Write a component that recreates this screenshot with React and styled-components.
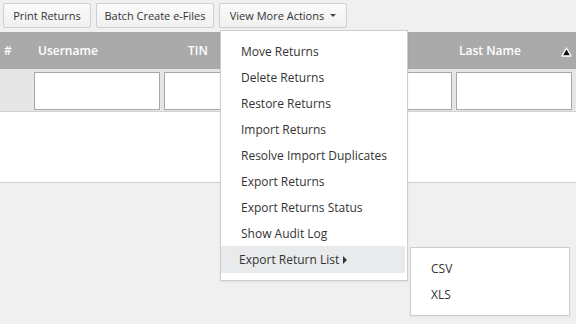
import React from "react";
import styled, { createGlobalStyle } from "styled-components";

const Global = createGlobalStyle`
  html, body { margin: 0; padding: 0; background: #f0f0f0; }
  body { font-family: "Open Sans", "Noto Sans", sans-serif; }
`;

const Page = styled.div`
  position: relative;
  width: 576px;
  height: 324px;
  overflow: hidden;
  background: #f0f0f0;
`;

const Toolbar = styled.div`
  display: flex;
  gap: 5px;
  height: 32px;
  padding: 3px 0 0 3px;
  box-sizing: border-box;
`;

const Button = styled.button`
  height: 25px;
  width: ${(p) => p.$w}px;
  padding: 0;
  border: 1px solid #cfcfcf;
  border-radius: 2px;
  background: linear-gradient(#fbfbfb, #f0f0f0);
  font-family: inherit;
  font-size: 11px;
  color: #333;
  display: flex;
  align-items: center;
  justify-content: center;
  gap: 6px;
`;

const Caret = styled.span`
  width: 0;
  height: 0;
  border-left: 3px solid transparent;
  border-right: 3px solid transparent;
  border-top: 3px solid #444;
`;

const Grid = styled.div`
  display: grid;
  grid-template-columns: 30px 130px 130px 162px 124px;
`;

const Header = styled(Grid)`
  height: 37px;
  background: #aaaaaa;
  color: #fff;
  font-size: 12px;
  font-weight: 600;
  align-items: center;
`;

const HeadCell = styled.div`
  position: relative;
  padding-left: ${(p) => p.$pl || 0}px;
  height: 100%;
  display: flex;
  align-items: center;
`;

const SortIcon = styled.svg`
  position: absolute;
  right: 4px;
  top: 15px;
`;

const FilterRow = styled(Grid)`
  height: 43px;
  background: #e6e6e6;
  border-bottom: 1px solid #d0d0d0;
  box-sizing: border-box;
  padding-top: 3px;
`;

const FilterCell = styled.div`
  padding: 0 ${(p) => (p.$last ? 4 : 0)}px 0 4px;
`;

const Input = styled.input`
  box-sizing: border-box;
  width: 100%;
  height: 38px;
  border: 1px solid #a8a8a8;
  background: #fff;
  margin: 0;
  padding: 0;
  display: block;
`;

const Body = styled.div`
  height: 70px;
  background: #fff;
  border-bottom: 1px solid #cfcfcf;
`;

const Menu = styled.div`
  position: absolute;
  left: ${(p) => p.$left}px;
  top: ${(p) => p.$top}px;
  width: ${(p) => p.$w}px;
  box-sizing: border-box;
  background: #fff;
  border: 1px solid #cdcdcd;
  padding: 8px 0 7px;
  box-shadow: 0 1px 2px rgba(0, 0, 0, 0.06);
`;

const Item = styled.div`
  height: 26px;
  line-height: 26px;
  padding-left: ${(p) => p.$pl || 20}px;
  font-size: 12px;
  color: #333;
  background: ${(p) => (p.$active ? "#e9eaec" : "transparent")};
  margin-top: ${(p) => (p.$active ? -1 : 0)}px;
  padding-top: ${(p) => (p.$active ? 1 : 0)}px;
  margin-right: ${(p) => (p.$active ? 2 : 0)}px;
  display: flex;
  align-items: center;
  gap: 4px;
`;

const RightCaret = styled.span`
  width: 0;
  height: 0;
  border-top: 4px solid transparent;
  border-bottom: 4px solid transparent;
  border-left: 4px solid #333;
`;

const items = [
  "Move Returns",
  "Delete Returns",
  "Restore Returns",
  "Import Returns",
  "Resolve Import Duplicates",
  "Export Returns",
  "Export Returns Status",
  "Show Audit Log",
];

export default function App() {
  return (
    <Page>
      <Global />
      <Toolbar>
        <Button $w={88}>Print Returns</Button>
        <Button $w={118}>Batch Create e-Files</Button>
        <Button $w={128}>
          View More Actions <Caret />
        </Button>
      </Toolbar>
      <Header>
        <HeadCell $pl={4}>#</HeadCell>
        <HeadCell $pl={8}>Username</HeadCell>
        <HeadCell $pl={28}>TIN</HeadCell>
        <HeadCell />
        <HeadCell $pl={7}>
          Last Name
          <SortIcon width="11" height="10" viewBox="0 0 11 10">
            <polygon points="5.5,1 10,9 1,9" fill="#111" stroke="#fff" strokeWidth="1.4" strokeLinejoin="round" />
          </SortIcon>
        </HeadCell>
      </Header>
      <FilterRow>
        <div />
        <FilterCell><Input /></FilterCell>
        <FilterCell><Input /></FilterCell>
        <FilterCell><Input /></FilterCell>
        <FilterCell $last><Input /></FilterCell>
      </FilterRow>
      <Body />
      <Menu $left={220} $top={30} $w={188}>
        {items.map((t) => (
          <Item key={t}>{t}</Item>
        ))}
        <Item $active $pl={18}>
          Export Return List <RightCaret />
        </Item>
      </Menu>
      <Menu $left={410} $top={247} $w={160}>
        <Item>CSV</Item>
        <Item>XLS</Item>
      </Menu>
    </Page>
  );
}
